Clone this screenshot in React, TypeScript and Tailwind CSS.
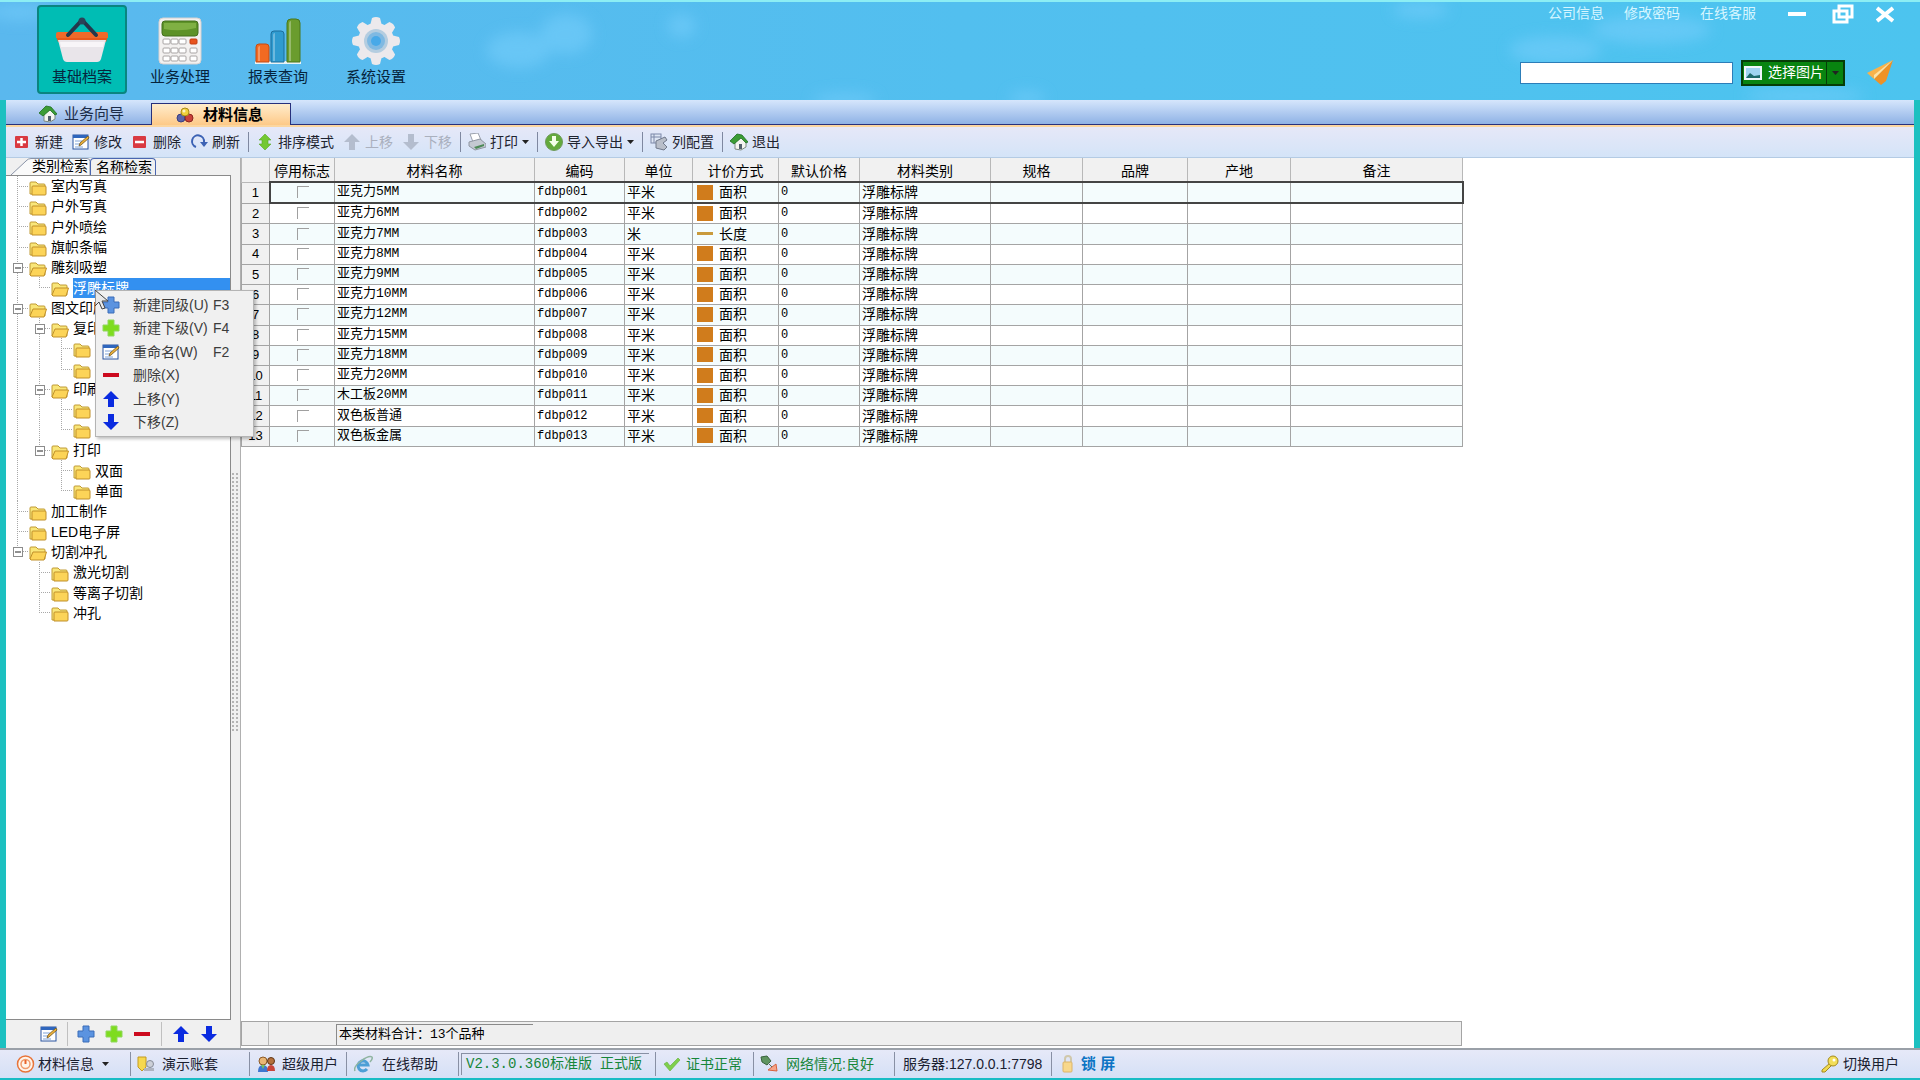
import React, { useState } from 'react';
import clsx from 'clsx';

type IconProps = { className?: string };

const Basket = () => (
  <svg width="56" height="48" viewBox="0 0 56 48">
    <path d="M2 19h52l-2 6H4z" fill="#e8591c" />
    <path d="M2 17q0-2 2-2h48q2 0 2 2v4H2z" fill="#f06a2a" />
    <path d="M4 23h48l-5 19q-1 3-4 3H13q-3 0-4-3z" fill="#e9e5ea" />
    <path d="M6 25h44l-1 5H7z" fill="#f8f5f8" />
    <path d="M14 18 27 4M29 4l13 14" stroke="#24384c" strokeWidth="4" strokeLinecap="round" />
    <circle cx="28" cy="4" r="3.500" fill="#2b4358" />
  </svg>
);

const Calculator = () => (
  <svg width="56" height="48" viewBox="0 0 56 48">
    <rect x="7" y="1" width="42" height="46" rx="4" fill="#f3f1f0" stroke="#d5d0d0" />
    <rect x="10" y="4" width="36" height="15" rx="3" fill="#5d9228" stroke="#44701c" />
    <path d="M12 6h32v5q-16 4-32 1z" fill="#7fb043" />
    {[22, 31, 39].map((y) =>
      [11, 19, 27, 38].map((x) => (
        <rect
          key={`${x}-${y}`}
          x={x}
          y={y}
          width="7"
          height="5"
          rx="1"
          fill={x === 38 && y === 22 ? '#e8531d' : '#fff'}
          stroke={x === 38 && y === 22 ? '#c43f12' : '#a8a4a4'}
        />
      )),
    )}
  </svg>
);

const Bars = () => (
  <svg width="56" height="48" viewBox="0 0 56 48">
    <rect x="5" y="44" width="46" height="3" fill="#e9f3f6" />
    <path d="M6 45V30q0-3 3-3h7q3 0 3 3v15z" fill="#f26a22" stroke="#c64b12" />
    <path d="M21 45V17q0-3 3-3h7q3 0 3 3v28z" fill="#2f9bd0" stroke="#1c6e9c" />
    <path d="M37 45V6q0-4 4-4h5q4 0 4 4v39z" fill="#6a9c2e" stroke="#4b771b" />
    <path d="M39 44V7q0-3 2-3v40zM23 44V18q0-2 2-2v28zM8 44V31q0-2 2-2v15z" fill="#fff" opacity=".3" />
  </svg>
);

const Gear = () => (
  <svg width="56" height="48" viewBox="0 0 56 48">
    <g fill="#ece9ec">
      {[0, 45, 90, 135, 180, 225, 270, 315].map((a) => (
        <path key={a} d="M22 9 24 1q4-2 8 0l2 8z" transform={`rotate(${a} 28 24)`} />
      ))}
      <circle cx="28" cy="24" r="18" />
    </g>
    <circle cx="28" cy="24" r="12" fill="#b4cde0" />
    <circle cx="28" cy="24" r="9" fill="#7fb9e2" />
    <circle cx="28" cy="24" r="5" fill="#48a9e8" />
  </svg>
);

const House = ({ className }: IconProps) => (
  <svg width="18" height="18" viewBox="0 0 18 18" className={className}>
    <path d="M5 9v7l6 1 5-3V8l-5-4z" fill="#f4f4f0" stroke="#7d8a80" />
    <path d="M0 8 7 1l5 1 6 7-2 1-5-5-7 6z" fill="#3c9c35" stroke="#1d6f22" strokeWidth=".8" />
    <path d="M9 11h3v5H9z" fill="#52606c" />
  </svg>
);

const Balls = () => (
  <svg width="18" height="18" viewBox="0 0 18 18">
    <circle cx="5" cy="12" r="4" fill="#5a62a8" stroke="#393f80" />
    <circle cx="13" cy="12" r="4" fill="#c9403a" stroke="#8b2420" />
    <circle cx="9" cy="6" r="4" fill="#f0cf3c" stroke="#a98a18" />
    <circle cx="8" cy="5" r="1.500" fill="#fff" opacity=".7" />
  </svg>
);

const RedBox = ({ plus }: { plus?: boolean }) => (
  <svg width="18" height="18" viewBox="0 0 18 18">
    <rect x="2" y="3" width="13" height="12" rx="1" fill="#d93a42" />
    <path d={plus ? 'M4 9h9M8.500 5v8' : 'M4 9h9'} stroke="#fff" strokeWidth="2.500" />
  </svg>
);

const Edit = () => (
  <svg width="18" height="18" viewBox="0 0 18 18">
    <rect x="1" y="2" width="15" height="14" fill="#fff" stroke="#2a55a0" />
    <path d="M1 2h15v3H1z" fill="#2f66bd" />
    <path d="M3 8h7M3 11h5M3 14h8" stroke="#7fa3d8" />
    <path d="m7 13 1-3 8-7 1 2-8 7z" fill="#f0b43a" stroke="#6f5420" strokeWidth=".8" />
  </svg>
);

const Refresh = () => (
  <svg width="18" height="18" viewBox="0 0 18 18">
    <path d="M6 14A6 6 0 1 1 14 9" fill="none" stroke="#3c62b4" strokeWidth="2" />
    <path d="M10 9h8l-4 5z" fill="#3c62b4" />
  </svg>
);

const Sort = () => (
  <svg width="18" height="18" viewBox="0 0 18 18">
    <path d="m9 1 6 6h-3v4h3l-6 6-6-6h3V7H3z" fill="#73c832" stroke="#59a824" strokeWidth=".6" />
  </svg>
);

const Arrow = ({ down, color = '#0a2be0' }: { down?: boolean; color?: string }) => (
  <svg width="18" height="18" viewBox="0 0 18 18">
    <path d="m9 1 8 8h-5v8H6V9H1z" fill={color} transform={down ? 'rotate(180 9 9)' : undefined} />
  </svg>
);

const Printer = () => (
  <svg width="18" height="18" viewBox="0 0 18 18">
    <path d="m2 1 8-1 3 7-8 2z" fill="#fff" stroke="#9aa0ac" />
    <path d="m1 9 11-3 6 5v3L7 17l-6-4z" fill="#c4c9d2" stroke="#8f96a2" />
    <path d="m6 14 10-3v2L8 16z" fill="#4d8a58" />
  </svg>
);

const ImportExport = () => (
  <svg width="18" height="18" viewBox="0 0 18 18">
    <circle cx="9" cy="9" r="8.500" fill="#63aa3c" stroke="#6f9a5c" />
    <path d="M7 3h4v5h3l-5 6-5-6h3z" fill="#f4ffe8" />
  </svg>
);

const Columns = () => (
  <svg width="18" height="18" viewBox="0 0 18 18">
    <rect x="1" y="1" width="10" height="9" fill="#dfe6f4" stroke="#7c88a8" />
    <path d="M1 4h10M4 1v9" stroke="#7c88a8" />
    <path d="m6 8 9-4 2 3-4 3 4 4-3 3-8-2z" fill="#b9bec9" stroke="#70788a" />
  </svg>
);

const Cross = ({ fill, stroke }: { fill: string; stroke: string }) => (
  <svg width="18" height="18" viewBox="0 0 18 18">
    <path d="M6 1h6v5h5v6h-5v5H6v-5H1V6h5z" fill={fill} stroke={stroke} />
  </svg>
);
const BluePlus = () => <Cross fill="#5b93e0" stroke="#3b6cb8" />;
const GreenPlus = () => <Cross fill="#7edc1e" stroke="#8fd85c" />;

const Minus = () => (
  <svg width="18" height="18" viewBox="0 0 18 18">
    <rect x="1" y="7" width="16" height="4" fill="#cc0a1e" />
  </svg>
);

const Folder = ({ open }: { open?: boolean }) => (
  <svg width="18" height="16" viewBox="0 0 18 16" className="shrink-0">
    <path d="M1 14V3q0-1 1-1h5l2 2h6q1 0 1 1v9z" fill="#f9e679" stroke="#c09a34" />
    <path
      d={open ? 'M1 14 4 7h13.500L15 15H2z' : 'M3 14V7q0-1 1-1h12q1 0 1 1v7q0 1-1 1H3z'}
      fill="#fcd458"
      stroke="#c0902a"
    />
  </svg>
);

const Power = () => (
  <svg width="19" height="18" viewBox="0 0 19 18">
    <circle cx="9.500" cy="9" r="8" fill="#fff4ea" stroke="#e8743a" strokeWidth="1.500" />
    <circle cx="9.500" cy="9" r="4.500" fill="none" stroke="#f09a6c" strokeWidth="1.500" />
    <path d="M9.500 5v4" stroke="#e8642a" strokeWidth="2" />
  </svg>
);

const Account = () => (
  <svg width="18" height="18" viewBox="0 0 18 18">
    <path d="M1 2h8v10l-4 4-4-4z" fill="#f6d84e" stroke="#c39a20" />
    <circle cx="13" cy="9" r="3.500" fill="#ccd0d8" stroke="#868c98" />
    <path d="M7 13h10v3H7z" fill="#aeb4c0" />
  </svg>
);

const Users = () => (
  <svg width="19" height="18" viewBox="0 0 19 18">
    <circle cx="6" cy="6" r="4" fill="#e9b676" stroke="#8b5a28" />
    <circle cx="14" cy="6" r="3.500" fill="#b5713d" stroke="#5f3517" />
    <path d="M1 17q0-7 5-7t5 7z" fill="#3f77d0" />
    <path d="M10 16q0-6 4-6t4 6z" fill="#c9453a" />
    <path d="m4 10 2 4 2-4z" fill="#78c060" />
  </svg>
);

const Browser = () => (
  <svg width="19" height="18" viewBox="0 0 19 18">
    <path d="M5 10h9a5 5 0 1 0-1 4" fill="none" stroke="#4e9fd6" strokeWidth="3" />
    <path d="M1 16Q-1 12 7 6t11-4q1 2-2 5" fill="none" stroke="#8fb4a0" strokeWidth="1.500" />
  </svg>
);

const Check = () => (
  <svg width="18" height="18" viewBox="0 0 18 18">
    <path d="m1 9 3-2 3 4 8-8 2 2L7 16z" fill="#7fcf4c" stroke="#5fae36" strokeWidth=".6" />
  </svg>
);

const Plug = () => (
  <svg width="19" height="18" viewBox="0 0 19 18">
    <path d="m1 2 6-1 4 5-4 4-5-3z" fill="#5f9460" stroke="#39633c" />
    <path d="m8 15 8-6 1 7z" fill="#f5a58a" stroke="#d8613c" />
    <path d="m8 8 4 4" stroke="#5b6f60" />
  </svg>
);

const Lock = () => (
  <svg width="18" height="18" viewBox="0 0 18 18">
    <path d="M6 8V4q0-3 3-3t3 3v3" fill="none" stroke="#d0c8ac" strokeWidth="2" />
    <rect x="4" y="7" width="9" height="10" rx="1" fill="#f8d88c" stroke="#dcb468" />
  </svg>
);

const Key = () => (
  <svg width="18" height="18" viewBox="0 0 18 18">
    <path d="m9 8-8 7v2h3l7-7" fill="#f0da50" stroke="#a48a1e" />
    <circle cx="12" cy="6" r="5" fill="#f3de58" stroke="#a48a1e" />
    <circle cx="13" cy="5" r="1.500" fill="#fff" />
  </svg>
);

const Caret = () => (
  <svg width="7" height="4" viewBox="0 0 7 4">
    <path d="M0 0h7L3.500 4z" fill="#222" />
  </svg>
);

const Sky = () => (
  <svg className="absolute inset-0 h-full w-full" aria-hidden="true">
    <defs>
      <filter id="soft">
        <feGaussianBlur stdDeviation="7" />
      </filter>
    </defs>
    <g filter="url(#soft)" fill="#74cdfb" opacity=".6">
      <ellipse cx="27%" cy="48" rx="32" ry="18" />
      <ellipse cx="29.500%" cy="32" rx="26" ry="20" />
      <ellipse cx="35.500%" cy="24" rx="14" ry="12" />
      <ellipse cx="44%" cy="98" rx="32" ry="7" />
      <ellipse cx="53.500%" cy="96" rx="18" ry="7" />
      <ellipse cx="74%" cy="8" rx="28" ry="8" />
      <ellipse cx="81%" cy="48" rx="46" ry="14" />
      <ellipse cx="86%" cy="28" rx="60" ry="14" />
      <ellipse cx="94%" cy="94" rx="60" ry="8" />
      <ellipse cx="1%" cy="10" rx="30" ry="8" />
    </g>
  </svg>
);

const modules = [
  { label: '基础档案', icon: Basket },
  { label: '业务处理', icon: Calculator },
  { label: '报表查询', icon: Bars },
  { label: '系统设置', icon: Gear },
];

function TopBar() {
  const [active, setActive] = useState(0);

  return (
    <header className="relative h-[100px] border-t-2 border-[#8ceef4] bg-linear-to-r from-[#5ab8ee] via-[#52bfef] to-[#4cc4ef]">
      <Sky />
      <div className="relative flex h-full items-start justify-between">
        <nav className="flex gap-2 pt-[3px] pl-[37px]">
          {modules.map(({ label, icon: Icon }, i) => (
            <button
              key={label}
              onClick={() => setActive(i)}
              className={clsx(
                'flex h-[89px] w-[90px] flex-col items-center rounded-sm border-2 pt-[10px] text-[15px] leading-5 text-[#06243c]',
                i === active ? 'border-[#0a8580] bg-[#00bdb4]' : 'border-transparent',
              )}
            >
              <Icon />
              <span className="mt-[2px]">{label}</span>
            </button>
          ))}
        </nav>
        <div className="flex flex-col items-end pr-[26px]">
          <div className="flex h-[23px] items-center text-[14px] text-[#d6f6ff]">
            <a href="#company" className="mr-5">公司信息</a>
            <a href="#password" className="mr-5">修改密码</a>
            <a href="#service" className="mr-8">在线客服</a>
            <button aria-label="最小化" className="mr-[26px]">
              <svg width="18" height="20"><path d="M0 10h18" stroke="#fff" strokeWidth="4" /></svg>
            </button>
            <button aria-label="还原" className="mr-[22px]">
              <svg width="22" height="20">
                <path d="M7 2h13v11H7zM2 7h13v11H2z" fill="none" stroke="#fff" strokeWidth="3" />
              </svg>
            </button>
            <button aria-label="关闭">
              <svg width="18" height="20"><path d="m1 4 16 13M17 4 1 17" stroke="#fff" strokeWidth="4" /></svg>
            </button>
          </div>
          <div className="mt-[34px] flex items-center">
            <input aria-label="搜索" className="h-[22px] w-[213px] border border-[#2c7db8] bg-white px-1 text-sm outline-none" />
            <button className="ml-2 flex h-[26px] w-[104px] items-center border-2 border-[#063d08] bg-[#088410] text-[14px] text-white">
              <svg width="18" height="14" className="ml-px">
                <rect x="1" y="1" width="16" height="12" fill="#9fd4f2" stroke="#eef6fb" strokeWidth="2" />
                <path d="m2 12 4-5 4 3 6-1v3z" fill="#1d6a6c" />
              </svg>
              <span className="ml-[6px]">选择图片</span>
              <span className="ml-[2px] flex h-full flex-1 items-center justify-center border-l border-[#063d08]">
                <Caret />
              </span>
            </button>
            <button aria-label="发送" className="ml-[22px]">
              <svg width="27" height="27">
                <path d="M26 1 0 14l7 6z" fill="#f9b24a" />
                <path d="M26 1 7 20l7 6 5-4z" fill="#ee9226" />
                <path d="M26 1 7 20v-4z" fill="#ffe2a4" />
              </svg>
            </button>
          </div>
        </div>
      </div>
    </header>
  );
}

function PageTabs() {
  return (
    <div className="flex h-[27px] items-end border-b-2 border-b-[#fbd6a0] bg-linear-to-b from-[#d6e6fc] to-[#8cb0e4] text-[15px] leading-5">
      <button className="flex h-[25px] w-[145px] items-center gap-[7px] border-b border-[#27307c] pt-[3px] pl-[33px] text-[#1c2c48]">
        <House />
        业务向导
      </button>
      <button className="flex h-[22px] w-[140px] items-center gap-[9px] border border-b-0 border-[#27307c] bg-linear-to-b from-[#ffeccb] to-[#fdc987] pl-6 font-bold text-black">
        <Balls />
        材料信息
      </button>
      <div className="h-[25px] flex-1 border-b border-[#27307c]" />
    </div>
  );
}

type Tool = { label: string; icon: () => React.ReactNode; caret?: boolean; disabled?: boolean };

const toolGroups: Tool[][] = [
  [
    { label: '新建', icon: () => <RedBox plus /> },
    { label: '修改', icon: Edit },
    { label: '删除', icon: () => <RedBox /> },
    { label: '刷新', icon: Refresh },
  ],
  [
    { label: '排序模式', icon: Sort },
    { label: '上移', icon: () => <Arrow color="#b4bdce" />, disabled: true },
    { label: '下移', icon: () => <Arrow color="#b4bdce" down />, disabled: true },
  ],
  [{ label: '打印', icon: Printer, caret: true }],
  [{ label: '导入导出', icon: ImportExport, caret: true }],
  [{ label: '列配置', icon: Columns }],
  [{ label: '退出', icon: () => <House /> }],
];

function Toolbar() {
  return (
    <div className="flex h-[31px] items-center gap-px border-b border-[#b4cbe4] bg-linear-to-b from-[#e6e8f8] to-[#d4e4f8] pl-[3px] text-[14px] text-[#1e2430]">
      {toolGroups.map((group, g) => (
        <React.Fragment key={g}>
          {g > 0 && <span className="mr-[2px] ml-[3px] h-5 w-px bg-[#7f88a0]" />}
          {group.map(({ label, icon: Icon, caret, disabled }) => (
            <button key={label} disabled={disabled} className="flex items-center gap-1 px-1 disabled:text-[#aab0be]">
              <Icon />
              {label}
              {caret && <Caret />}
            </button>
          ))}
        </React.Fragment>
      ))}
    </div>
  );
}

type Node = { label: string; level: 0 | 1 | 2; open?: boolean; selected?: boolean };

const tree: Node[] = [
  { label: '室内写真', level: 0 },
  { label: '户外写真', level: 0 },
  { label: '户外喷绘', level: 0 },
  { label: '旗帜条幅', level: 0 },
  { label: '雕刻吸塑', level: 0, open: true },
  { label: '浮雕标牌', level: 1, selected: true },
  { label: '图文印刷', level: 0, open: true },
  { label: '复印', level: 1, open: true },
  { label: '', level: 2 },
  { label: '', level: 2 },
  { label: '印刷', level: 1, open: true },
  { label: '', level: 2 },
  { label: '', level: 2 },
  { label: '打印', level: 1, open: true },
  { label: '双面', level: 2 },
  { label: '单面', level: 2 },
  { label: '加工制作', level: 0 },
  { label: 'LED电子屏', level: 0 },
  { label: '切割冲孔', level: 0, open: true },
  { label: '激光切割', level: 1 },
  { label: '等离子切割', level: 1 },
  { label: '冲孔', level: 1 },
];

// a parent line runs through a row while its level has more siblings below
const hasMore = (index: number, level: number) => {
  const next = tree.slice(index + 1).find((n) => n.level <= level);
  return next !== undefined && next.level === level;
};

function TreeRow({ node, index }: { node: Node; index: number }) {
  return (
    <li className="flex items-stretch">
      {[0, 1, 2].slice(0, node.level + 1).map((lv) => {
        const own = lv === node.level;
        const more = hasMore(index, lv);
        return (
          <span key={lv} className="flex w-[22px] shrink-0 items-center">
            <svg width="22" height="21" viewBox="0 0 22 21">
              <g stroke="#a8a8a8" strokeDasharray="1 1">
                {(own || more) && <path d={more ? 'M10.500 0v21' : 'M10.500 0v11'} />}
                {own && <path d="M10 10.500h12" />}
              </g>
              {own && node.open && (
                <>
                  <rect x="6.500" y="6.500" width="9" height="9" fill="#fff" stroke="#8c8c8c" />
                  <path d="M8 11h6" stroke="#222" />
                </>
              )}
            </svg>
          </span>
        );
      })}
      <span className="flex items-center pt-[3px]">
        <Folder open={node.open || node.selected} />
      </span>
      <span
        className={clsx(
          'ml-1 flex items-center leading-5',
          node.selected && 'flex-1 bg-[#3390f0] text-white',
        )}
      >
        {node.label}
      </span>
    </li>
  );
}

const menuItems = [
  { label: '新建同级(U)', hotkey: 'F3', icon: BluePlus },
  { label: '新建下级(V)', hotkey: 'F4', icon: GreenPlus },
  { label: '重命名(W)', hotkey: 'F2', icon: Edit },
  { label: '删除(X)', hotkey: '', icon: Minus },
  { label: '上移(Y)', hotkey: '', icon: () => <Arrow /> },
  { label: '下移(Z)', hotkey: '', icon: () => <Arrow down /> },
];

function ContextMenu() {
  return (
    <div className="absolute top-[114px] left-[89px] z-10 grid h-[147px] w-[159px] auto-rows-fr border border-[#b4b4b4] bg-[#f0f0f0] py-[2px] text-[14px] text-[#3c3c3c] shadow-[2px_2px_3px_rgba(0,0,0,0.25)]">
      {menuItems.map(({ label, hotkey, icon: Icon }) => (
        <button key={label} className="flex items-center pl-[6px] text-left leading-5">
          <Icon />
          <span className="ml-[13px] w-20">{label}</span>
          <span>{hotkey}</span>
        </button>
      ))}
      <svg width="14" height="21" viewBox="0 0 14 21" className="absolute -top-px -left-px">
        <path d="M0 0v16l4-4 3 7 3-1-3-7h6z" fill="#e8e8e8" stroke="#444" />
      </svg>
    </div>
  );
}

function SidePanel() {
  return (
    <aside className="flex w-[225px] shrink-0 flex-col bg-[#f0f0f0] text-[14px] text-black">
      <div className="flex h-[17px] items-end leading-[17px]">
        <button className="relative h-[17px] w-[84px] pl-[26px] text-left">
          <svg width="84" height="17" className="absolute inset-0">
            <path d="M5 17 20 3q2-2.500 5-2.500h56q3 0 3 3V17" fill="#fafafa" stroke="#8a94a8" />
          </svg>
          <span className="relative">类别检索</span>
        </button>
        <button className="h-[17px] w-[66px] rounded-t border border-b-0 border-[#4a66b0] pl-[5px] text-left leading-[15px]">
          名称检索
        </button>
      </div>
      <div className="relative flex-1 border-t border-r border-b border-[#8a8a8a] bg-white">
        <ul className="grid h-[447px] auto-rows-fr pl-px">
          {tree.map((node, i) => (
            <TreeRow key={i} node={node} index={i} />
          ))}
        </ul>
        <ContextMenu />
      </div>
      <div className="flex h-[28px] items-center pl-[34px]">
        <button aria-label="重命名"><Edit /></button>
        <span className="mx-[9px] h-6 w-px bg-[#c0c0c0]" />
        <div className="flex gap-[10px]">
          <button aria-label="新建同级"><BluePlus /></button>
          <button aria-label="新建下级"><GreenPlus /></button>
          <button aria-label="删除"><Minus /></button>
        </div>
        <span className="mx-[10px] h-6 w-px bg-[#c0c0c0]" />
        <div className="flex gap-[10px]">
          <button aria-label="上移"><Arrow /></button>
          <button aria-label="下移"><Arrow down /></button>
        </div>
      </div>
    </aside>
  );
}

const columns = [
  { title: '', width: 28 },
  { title: '停用标志', width: 65 },
  { title: '材料名称', width: 200 },
  { title: '编码', width: 90 },
  { title: '单位', width: 68 },
  { title: '计价方式', width: 86 },
  { title: '默认价格', width: 81 },
  { title: '材料类别', width: 131 },
  { title: '规格', width: 92 },
  { title: '品牌', width: 105 },
  { title: '产地', width: 103 },
  { title: '备注', width: 172 },
];

const materials = [
  '亚克力5MM',
  '亚克力6MM',
  '亚克力7MM',
  '亚克力8MM',
  '亚克力9MM',
  '亚克力10MM',
  '亚克力12MM',
  '亚克力15MM',
  '亚克力18MM',
  '亚克力20MM',
  '木工板20MM',
  '双色板普通',
  '双色板金属',
];

function MaterialTable() {
  return (
    <table className="h-[289px] w-[1221px] table-fixed border-collapse text-[14px] leading-[18px] text-black">
      <colgroup>
        {columns.map((c, i) => (
          <col key={i} style={{ width: c.width }} />
        ))}
      </colgroup>
      <thead>
        <tr className="h-6 bg-[#f1f1f1]">
          {columns.map((c, i) => (
            <th key={i} className="border border-t-0 border-[#b8b8b8] p-0 pt-[2px] text-center font-normal">
              {c.title}
            </th>
          ))}
        </tr>
      </thead>
      <tbody>
        {materials.map((name, i) => {
          const byLength = i === 2;
          const cell = clsx('border border-[#a4a4a4] p-0 pb-px pl-[2px]', i === 0 && 'border-y-2 border-y-[#444]');
          return (
            <tr key={name} className={i % 2 === 0 ? 'bg-[#f4fcfd]' : 'bg-white'}>
              <td className="border border-[#a4a4a4] bg-[#f1f1f1] p-0 text-center font-['Liberation_Sans'] text-[13px]">
                {i + 1}
              </td>
              <td className={clsx(cell, i === 0 && 'border-l-2 border-l-[#444]')}>
                <input
                  type="checkbox"
                  aria-label={`停用 ${name}`}
                  className="mx-auto block size-3 appearance-none border-t border-l border-[#a0a0a0]"
                />
              </td>
              <td className={clsx(cell, "font-['Liberation_Mono','Noto_Sans_CJK_SC',monospace] text-[13px]")}>{name}</td>
              <td className={clsx(cell, "font-['Liberation_Mono',monospace] text-[12px]")}>
                fdbp{String(i + 1).padStart(3, '0')}
              </td>
              <td className={cell}>{byLength ? '米' : '平米'}</td>
              <td className={cell}>
                <div className="flex items-center gap-[6px] pl-[2px]">
                  <span className={clsx('w-4', byLength ? 'h-[3px] bg-[#c99a3c]' : 'h-[15px] bg-[#d07c1c]')} />
                  {byLength ? '长度' : '面积'}
                </div>
              </td>
              <td className={clsx(cell, "font-['Liberation_Mono',monospace] text-[12px]")}>0</td>
              <td className={cell}>浮雕标牌</td>
              <td className={cell} />
              <td className={cell} />
              <td className={cell} />
              <td className={clsx(cell, i === 0 && 'border-r-2 border-r-[#444]')} />
            </tr>
          );
        })}
      </tbody>
    </table>
  );
}

function StatusCell({ width, children }: { width: string; children: React.ReactNode }) {
  return (
    <div className={clsx('flex items-center', width)}>
      {children}
      <span className="ml-auto h-6 w-px bg-[#8890a4]" />
    </div>
  );
}

function StatusBar() {
  return (
    <footer className="flex h-[30px] items-center border-t-2 border-[#9aa0a8] bg-linear-to-b from-[#e6e9f8] to-[#d5e0f6] pl-[5px] text-[14px] text-[#1a2030]">
      <StatusCell width="w-[126px]">
        <button className="flex items-center gap-[3px] pl-[11px]">
          <Power />
          材料信息
          <span className="ml-[5px]"><Caret /></span>
        </button>
      </StatusCell>
      <StatusCell width="w-[119px]">
        <span className="flex items-center gap-[7px] pl-[6px]"><Account />演示账套</span>
      </StatusCell>
      <StatusCell width="w-[97px]">
        <span className="flex items-center gap-[6px] pl-[7px]"><Users />超级用户</span>
      </StatusCell>
      <StatusCell width="w-[112px]">
        <a href="#help" className="flex items-center gap-[9px] pl-[7px]"><Browser />在线帮助</a>
      </StatusCell>
      <StatusCell width="w-[197px]">
        <span className="ml-[2px] flex h-[22px] w-[188px] items-center gap-2 border-t border-l border-[#8890a4] pl-[4px] font-['Liberation_Mono','Noto_Sans_CJK_SC',monospace] text-[14px] whitespace-nowrap text-[#17863a]">
          <span>V2.3.0.360标准版</span>
          <span>正式版</span>
        </span>
      </StatusCell>
      <StatusCell width="w-[98px]">
        <span className="flex items-center gap-[5px] pl-[7px] text-[#17863a]"><Check />证书正常</span>
      </StatusCell>
      <StatusCell width="w-[141px]">
        <span className="flex items-center gap-[7px] pl-[6px] text-[#17863a]"><Plug />网络情况:良好</span>
      </StatusCell>
      <StatusCell width="w-[157px]">
        <span className="pl-2 text-[14px]">服务器:127.0.0.1:7798</span>
      </StatusCell>
      <button className="flex items-center gap-1 pl-[7px] text-[15px] font-bold text-[#0c74c4]">
        <Lock />
        锁 屏
      </button>
      <button className="mr-[21px] ml-auto flex items-center gap-1">
        <Key />
        切换用户
      </button>
    </footer>
  );
}

export default function App() {
  return (
    <div className="flex min-h-screen flex-col border-b-2 border-[#18bcc4] bg-white font-['Liberation_Sans','Noto_Sans_CJK_SC',sans-serif]">
      <TopBar />
      <div className="flex flex-1 flex-col border-x-6 border-[#1cc0c0]">
        <PageTabs />
        <Toolbar />
        <main className="flex flex-1">
          <SidePanel />
          <div className="flex w-[10px] shrink-0 items-start border-r border-[#b0b0b0] bg-[#f0f0f0]">
            <div className="mt-[314px] h-[260px] w-2 bg-[radial-gradient(circle,#b4b4b4_1px,transparent_1px)] bg-size-[4px_4px]" />
          </div>
          <section className="flex min-w-0 flex-1 flex-col">
            <MaterialTable />
            <div className="mt-auto mb-[2px] flex h-[25px] w-[1221px] border border-[#a4a4a4] bg-[#efefef]">
              <div className="w-[27px] border-r border-[#b8b8b8]" />
              <p className="mt-[2px] ml-[67px] w-[197px] border-t border-l border-[#8a8a8a] pl-[2px] font-['Liberation_Mono','Noto_Sans_CJK_SC',monospace] text-[13px] leading-5">
                本类材料合计：13个品种
              </p>
            </div>
          </section>
        </main>
      </div>
      <StatusBar />
    </div>
  );
}
